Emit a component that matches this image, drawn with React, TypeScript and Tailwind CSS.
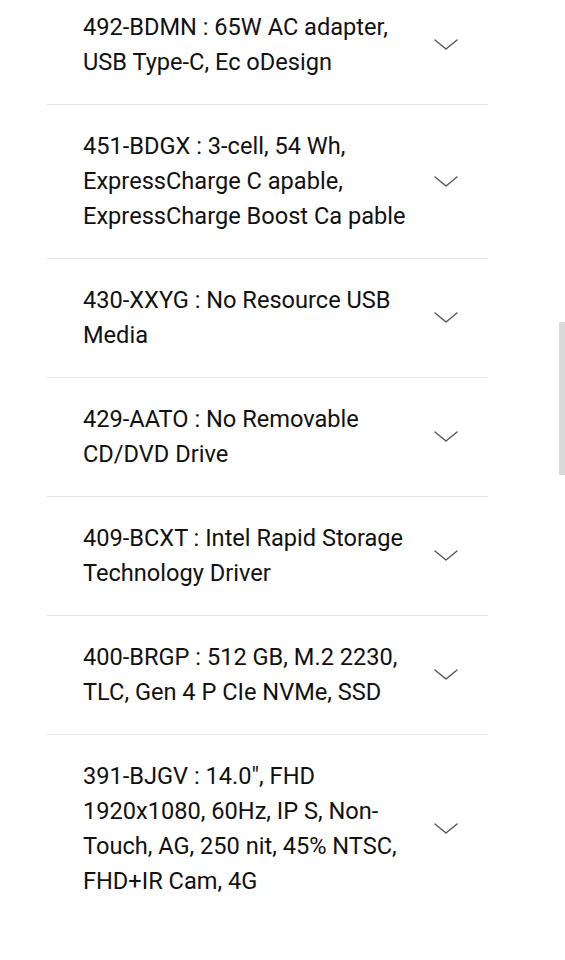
const items: string[][] = [
  ['492-BDMN : 65W AC adapter,', 'USB Type-C, Ec oDesign'],
  ['451-BDGX : 3-cell, 54 Wh,', 'ExpressCharge C apable,', 'ExpressCharge Boost Ca pable'],
  ['430-XXYG : No Resource USB', 'Media'],
  ['429-AATO : No Removable', 'CD/DVD Drive'],
  ['409-BCXT : Intel Rapid Storage', 'Technology Driver'],
  ['400-BRGP : 512 GB, M.2 2230,', 'TLC, Gen 4 P CIe NVMe, SSD'],
  ['391-BJGV : 14.0", FHD', '1920x1080, 60Hz, IP S, Non-', 'Touch, AG, 250 nit, 45% NTSC,', 'FHD+IR Cam, 4G'],
]

function Chevron() {
  return (
    <svg width="24" height="14" viewBox="0 0 24 14" fill="none" className="shrink-0">
      <path d="M1 2l11 9 11-9" stroke="#555" strokeWidth="1.4" strokeLinecap="round" strokeLinejoin="round" />
    </svg>
  )
}

export default function App() {
  return (
    <div className="relative h-[960px] w-[565px] overflow-hidden bg-white" style={{ fontFamily: 'Roboto, "Noto Sans", sans-serif' }}>
      <div className="ml-[47px] -mt-[14px] w-[441px]">
        {items.map((lines, i) => (
          <div
            key={i}
            className={`flex items-center justify-between py-[24px] pl-[36px] pr-[30px] ${
              i < items.length - 1 ? 'border-b border-[#e6e6e6]' : ''
            }`}
          >
            <div className="text-[23.6px] leading-[35px] text-[#111]">
              {lines.map((l, j) => (
                <div key={j} className="whitespace-nowrap">{l}</div>
              ))}
            </div>
            <Chevron />
          </div>
        ))}
      </div>
      {/* scrollbar */}
      <div className="absolute left-[559px] top-[322px] h-[153px] w-[6px] bg-[#dadada]" />
    </div>
  )
}
